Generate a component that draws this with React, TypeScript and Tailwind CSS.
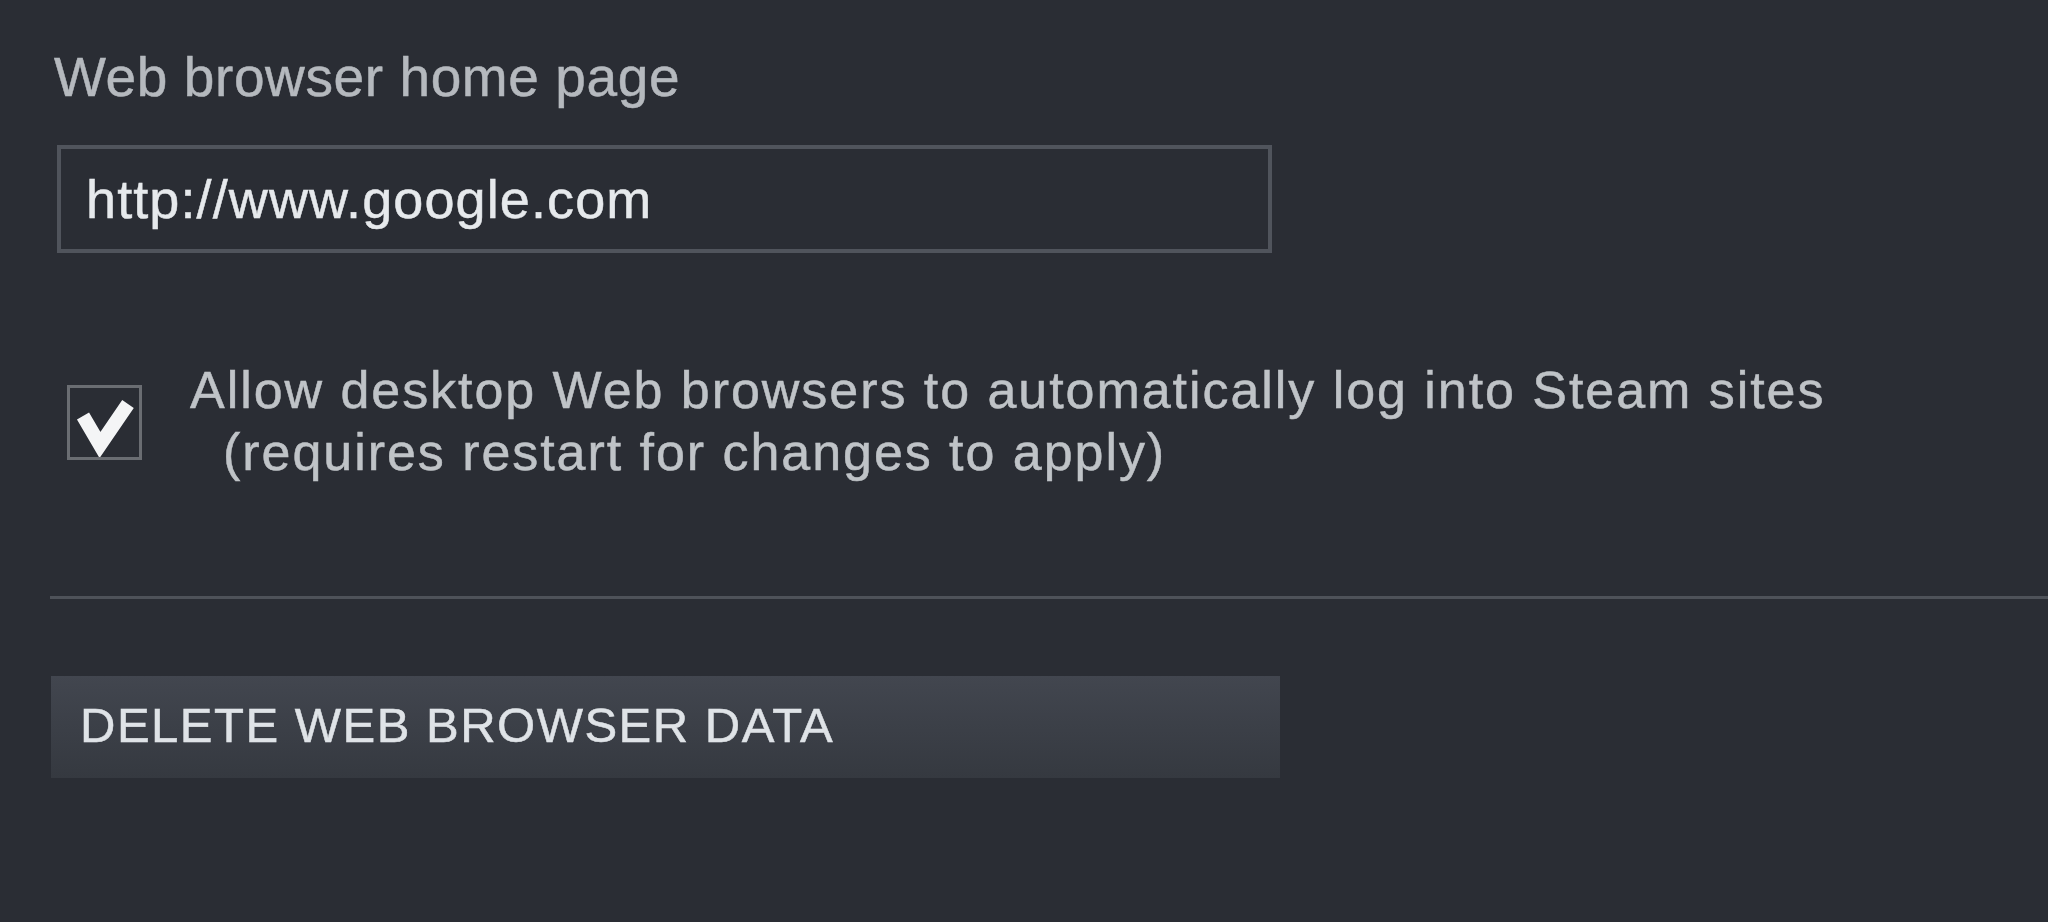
export default function App() {
  return (
    <div
      className="w-full h-[922px] bg-[#2a2d34] overflow-hidden pl-[50px] pt-[50px] [-webkit-text-stroke:0.5px_currentcolor]"
      style={{ fontFamily: '"Liberation Sans", Arial, sans-serif' }}
    >
      {/* home page field */}
      <div className="ml-[4px] text-[55px] leading-[55px] tracking-[0.6px] text-[#b5b9be]">
        Web browser home page
      </div>
      <div className="ml-[7px] mt-[40px] w-[1215px] h-[108px] border-[4px] border-[#50545c] pl-[25px] pt-[23px]">
        <div className="text-[54px] leading-[54px] tracking-[1.1px] text-[#e6e9ec]">
          http://www.google.com
        </div>
      </div>

      {/* auto login checkbox */}
      <div className="flex items-start mt-[106px]">
        <div className="ml-[17px] mt-[26px] w-[75px] h-[75px] border-[3px] border-[#6a6d72] shrink-0">
          <svg width="69" height="69" viewBox="0 0 69 69">
            <polyline
              points="13,28 30,57 58,16"
              fill="none"
              stroke="#f4f5f6"
              strokeWidth="14"
              strokeLinejoin="miter"
            />
          </svg>
        </div>
        <div className="ml-[48px] text-[52px] leading-[62px] tracking-[1.95px] text-[#bfc3c7]">
          <div>Allow desktop Web browsers to automatically log into Steam sites</div>
          <div className="pl-[33px]">(requires restart for changes to apply)</div>
        </div>
      </div>

      <div className="mt-[113px] h-[3px] bg-[#4e5259]" />

      {/* delete data button */}
      <div className="mt-[77px] ml-[1px] w-[1229px] h-[102px] bg-linear-to-b from-[#42464f] to-[#353940] pl-[29px] pt-[25px]">
        <div className="text-[49px] leading-[49px] tracking-[1.5px] text-[#dfe3e7]">
          DELETE WEB BROWSER DATA
        </div>
      </div>
    </div>
  )
}
